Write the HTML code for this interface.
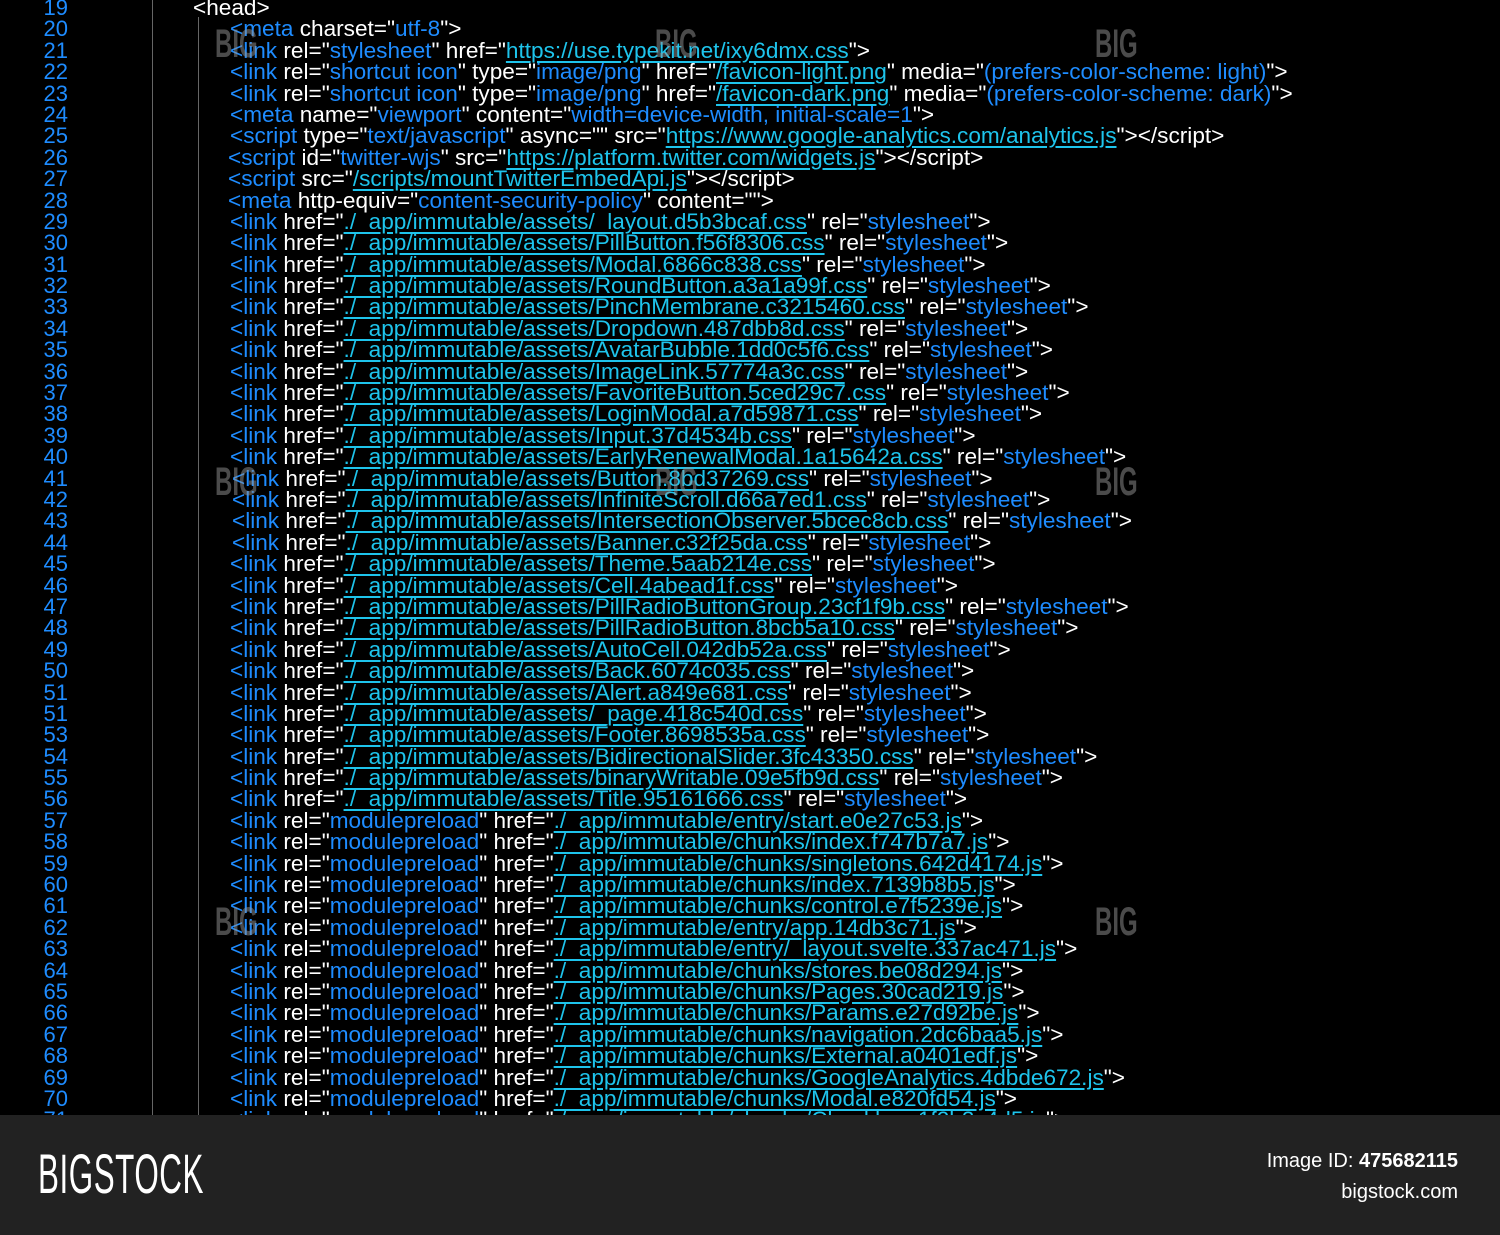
<!DOCTYPE html>
<html><head><meta charset="utf-8"><style>
html,body{margin:0;padding:0;background:#000;width:1500px;height:1235px;overflow:hidden;position:relative}
.code{position:absolute;left:0;top:-3px;font-family:"Liberation Sans","DejaVu Sans",sans-serif;font-size:22.6px;line-height:21.4px;color:#fff;white-space:pre}
.ln{position:absolute;left:0;width:68px;text-align:right;top:-3px;font-family:"Liberation Sans",sans-serif;font-size:22px;line-height:21.4px;color:#1e8cff}
.l{display:block;height:21.4px}
b{font-weight:normal;color:#1e8cff}
u{color:#1ec4ec;text-decoration:underline;text-decoration-color:#1ec4ec;text-underline-offset:3px}
.v{position:absolute;width:1px;background:#666}
.foot{position:absolute;left:0;top:1115px;width:1500px;height:120px;background:#222}
.logo{position:absolute;left:38px;top:1143px;font-family:"Liberation Sans",sans-serif;font-size:56px;color:#fff;transform:scaleX(0.56);transform-origin:left top;letter-spacing:1px;line-height:62px}
.id{position:absolute;right:42px;top:1146px;font-family:"Liberation Sans",sans-serif;font-size:20px;color:#fff;text-align:right;line-height:31px}
.wm{position:absolute;font-family:"Liberation Sans",sans-serif;font-size:40px;color:rgba(150,150,150,0.5);font-weight:bold;transform:scaleX(0.6);transform-origin:left top}
</style></head><body>
<div class="v" style="left:152px;top:0;height:1115px"></div>
<div class="v" style="left:198px;top:17px;height:1098px"></div>
<div class="ln"><span class="l">19</span><span class="l">20</span><span class="l">21</span><span class="l">22</span><span class="l">23</span><span class="l">24</span><span class="l">25</span><span class="l">26</span><span class="l">27</span><span class="l">28</span><span class="l">29</span><span class="l">30</span><span class="l">31</span><span class="l">32</span><span class="l">33</span><span class="l">34</span><span class="l">35</span><span class="l">36</span><span class="l">37</span><span class="l">38</span><span class="l">39</span><span class="l">40</span><span class="l">41</span><span class="l">42</span><span class="l">43</span><span class="l">44</span><span class="l">45</span><span class="l">46</span><span class="l">47</span><span class="l">48</span><span class="l">49</span><span class="l">50</span><span class="l">51</span><span class="l">51</span><span class="l">53</span><span class="l">54</span><span class="l">55</span><span class="l">56</span><span class="l">57</span><span class="l">58</span><span class="l">59</span><span class="l">60</span><span class="l">61</span><span class="l">62</span><span class="l">63</span><span class="l">64</span><span class="l">65</span><span class="l">66</span><span class="l">67</span><span class="l">68</span><span class="l">69</span><span class="l">70</span><span class="l">71</span></div>
<div class="code"><span class="l" style="padding-left:193px">&lt;head&gt;</span><span class="l" style="padding-left:230px"><b>&lt;meta</b> charset="<b>utf-8</b>"&gt;</span><span class="l" style="padding-left:230px"><b>&lt;link</b> rel="<b>stylesheet</b>" href="<u>https://use.typekit.net/ixy6dmx.css</u>"&gt;</span><span class="l" style="padding-left:230px"><b>&lt;link</b> rel="<b>shortcut icon</b>" type="<b>image/png</b>" href="<u>/favicon-light.png</u>" media="<b>(prefers-color-scheme: light)</b>"&gt;</span><span class="l" style="padding-left:230px"><b>&lt;link</b> rel="<b>shortcut icon</b>" type="<b>image/png</b>" href="<u>/favicon-dark.png</u>" media="<b>(prefers-color-scheme: dark)</b>"&gt;</span><span class="l" style="padding-left:230px"><b>&lt;meta</b> name="<b>viewport</b>" content="<b>width=device-width, initial-scale=1</b>"&gt;</span><span class="l" style="padding-left:230px"><b>&lt;script</b> type="<b>text/javascript</b>" async="" src="<u>https://www.google-analytics.com/analytics.js</u>"&gt;&lt;/script&gt;</span><span class="l" style="padding-left:228px"><b>&lt;script</b> id="<b>twitter-wjs</b>" src="<u>https://platform.twitter.com/widgets.js</u>"&gt;&lt;/script&gt;</span><span class="l" style="padding-left:228px"><b>&lt;script</b> src="<u>/scripts/mountTwitterEmbedApi.js</u>"&gt;&lt;/script&gt;</span><span class="l" style="padding-left:228px"><b>&lt;meta</b> http-equiv="<b>content-security-policy</b>" content=""&gt;</span><span class="l" style="padding-left:230px"><b>&lt;link</b> href="<u>./_app/immutable/assets/_layout.d5b3bcaf.css</u>" rel="<b>stylesheet</b>"&gt;</span><span class="l" style="padding-left:230px"><b>&lt;link</b> href="<u>./_app/immutable/assets/PillButton.f56f8306.css</u>" rel="<b>stylesheet</b>"&gt;</span><span class="l" style="padding-left:230px"><b>&lt;link</b> href="<u>./_app/immutable/assets/Modal.6866c838.css</u>" rel="<b>stylesheet</b>"&gt;</span><span class="l" style="padding-left:230px"><b>&lt;link</b> href="<u>./_app/immutable/assets/RoundButton.a3a1a99f.css</u>" rel="<b>stylesheet</b>"&gt;</span><span class="l" style="padding-left:230px"><b>&lt;link</b> href="<u>./_app/immutable/assets/PinchMembrane.c3215460.css</u>" rel="<b>stylesheet</b>"&gt;</span><span class="l" style="padding-left:230px"><b>&lt;link</b> href="<u>./_app/immutable/assets/Dropdown.487dbb8d.css</u>" rel="<b>stylesheet</b>"&gt;</span><span class="l" style="padding-left:230px"><b>&lt;link</b> href="<u>./_app/immutable/assets/AvatarBubble.1dd0c5f6.css</u>" rel="<b>stylesheet</b>"&gt;</span><span class="l" style="padding-left:230px"><b>&lt;link</b> href="<u>./_app/immutable/assets/ImageLink.57774a3c.css</u>" rel="<b>stylesheet</b>"&gt;</span><span class="l" style="padding-left:230px"><b>&lt;link</b> href="<u>./_app/immutable/assets/FavoriteButton.5ced29c7.css</u>" rel="<b>stylesheet</b>"&gt;</span><span class="l" style="padding-left:230px"><b>&lt;link</b> href="<u>./_app/immutable/assets/LoginModal.a7d59871.css</u>" rel="<b>stylesheet</b>"&gt;</span><span class="l" style="padding-left:230px"><b>&lt;link</b> href="<u>./_app/immutable/assets/Input.37d4534b.css</u>" rel="<b>stylesheet</b>"&gt;</span><span class="l" style="padding-left:230px"><b>&lt;link</b> href="<u>./_app/immutable/assets/EarlyRenewalModal.1a15642a.css</u>" rel="<b>stylesheet</b>"&gt;</span><span class="l" style="padding-left:232px"><b>&lt;link</b> href="<u>./_app/immutable/assets/Button.8bd37269.css</u>" rel="<b>stylesheet</b>"&gt;</span><span class="l" style="padding-left:232px"><b>&lt;link</b> href="<u>./_app/immutable/assets/InfiniteScroll.d66a7ed1.css</u>" rel="<b>stylesheet</b>"&gt;</span><span class="l" style="padding-left:232px"><b>&lt;link</b> href="<u>./_app/immutable/assets/IntersectionObserver.5bcec8cb.css</u>" rel="<b>stylesheet</b>"&gt;</span><span class="l" style="padding-left:232px"><b>&lt;link</b> href="<u>./_app/immutable/assets/Banner.c32f25da.css</u>" rel="<b>stylesheet</b>"&gt;</span><span class="l" style="padding-left:230px"><b>&lt;link</b> href="<u>./_app/immutable/assets/Theme.5aab214e.css</u>" rel="<b>stylesheet</b>"&gt;</span><span class="l" style="padding-left:230px"><b>&lt;link</b> href="<u>./_app/immutable/assets/Cell.4abead1f.css</u>" rel="<b>stylesheet</b>"&gt;</span><span class="l" style="padding-left:230px"><b>&lt;link</b> href="<u>./_app/immutable/assets/PillRadioButtonGroup.23cf1f9b.css</u>" rel="<b>stylesheet</b>"&gt;</span><span class="l" style="padding-left:230px"><b>&lt;link</b> href="<u>./_app/immutable/assets/PillRadioButton.8bcb5a10.css</u>" rel="<b>stylesheet</b>"&gt;</span><span class="l" style="padding-left:230px"><b>&lt;link</b> href="<u>./_app/immutable/assets/AutoCell.042db52a.css</u>" rel="<b>stylesheet</b>"&gt;</span><span class="l" style="padding-left:230px"><b>&lt;link</b> href="<u>./_app/immutable/assets/Back.6074c035.css</u>" rel="<b>stylesheet</b>"&gt;</span><span class="l" style="padding-left:230px"><b>&lt;link</b> href="<u>./_app/immutable/assets/Alert.a849e681.css</u>" rel="<b>stylesheet</b>"&gt;</span><span class="l" style="padding-left:230px"><b>&lt;link</b> href="<u>./_app/immutable/assets/_page.418c540d.css</u>" rel="<b>stylesheet</b>"&gt;</span><span class="l" style="padding-left:230px"><b>&lt;link</b> href="<u>./_app/immutable/assets/Footer.8698535a.css</u>" rel="<b>stylesheet</b>"&gt;</span><span class="l" style="padding-left:230px"><b>&lt;link</b> href="<u>./_app/immutable/assets/BidirectionalSlider.3fc43350.css</u>" rel="<b>stylesheet</b>"&gt;</span><span class="l" style="padding-left:230px"><b>&lt;link</b> href="<u>./_app/immutable/assets/binaryWritable.09e5fb9d.css</u>" rel="<b>stylesheet</b>"&gt;</span><span class="l" style="padding-left:230px"><b>&lt;link</b> href="<u>./_app/immutable/assets/Title.95161666.css</u>" rel="<b>stylesheet</b>"&gt;</span><span class="l" style="padding-left:230px"><b>&lt;link</b> rel="<b>modulepreload</b>" href="<u>./_app/immutable/entry/start.e0e27c53.js</u>"&gt;</span><span class="l" style="padding-left:230px"><b>&lt;link</b> rel="<b>modulepreload</b>" href="<u>./_app/immutable/chunks/index.f747b7a7.js</u>"&gt;</span><span class="l" style="padding-left:230px"><b>&lt;link</b> rel="<b>modulepreload</b>" href="<u>./_app/immutable/chunks/singletons.642d4174.js</u>"&gt;</span><span class="l" style="padding-left:230px"><b>&lt;link</b> rel="<b>modulepreload</b>" href="<u>./_app/immutable/chunks/index.7139b8b5.js</u>"&gt;</span><span class="l" style="padding-left:230px"><b>&lt;link</b> rel="<b>modulepreload</b>" href="<u>./_app/immutable/chunks/control.e7f5239e.js</u>"&gt;</span><span class="l" style="padding-left:230px"><b>&lt;link</b> rel="<b>modulepreload</b>" href="<u>./_app/immutable/entry/app.14db3c71.js</u>"&gt;</span><span class="l" style="padding-left:230px"><b>&lt;link</b> rel="<b>modulepreload</b>" href="<u>./_app/immutable/entry/_layout.svelte.337ac471.js</u>"&gt;</span><span class="l" style="padding-left:230px"><b>&lt;link</b> rel="<b>modulepreload</b>" href="<u>./_app/immutable/chunks/stores.be08d294.js</u>"&gt;</span><span class="l" style="padding-left:230px"><b>&lt;link</b> rel="<b>modulepreload</b>" href="<u>./_app/immutable/chunks/Pages.30cad219.js</u>"&gt;</span><span class="l" style="padding-left:230px"><b>&lt;link</b> rel="<b>modulepreload</b>" href="<u>./_app/immutable/chunks/Params.e27d92be.js</u>"&gt;</span><span class="l" style="padding-left:230px"><b>&lt;link</b> rel="<b>modulepreload</b>" href="<u>./_app/immutable/chunks/navigation.2dc6baa5.js</u>"&gt;</span><span class="l" style="padding-left:230px"><b>&lt;link</b> rel="<b>modulepreload</b>" href="<u>./_app/immutable/chunks/External.a0401edf.js</u>"&gt;</span><span class="l" style="padding-left:230px"><b>&lt;link</b> rel="<b>modulepreload</b>" href="<u>./_app/immutable/chunks/GoogleAnalytics.4dbde672.js</u>"&gt;</span><span class="l" style="padding-left:230px"><b>&lt;link</b> rel="<b>modulepreload</b>" href="<u>./_app/immutable/chunks/Modal.e820fd54.js</u>"&gt;</span><span class="l" style="padding-left:230px"><b>&lt;link</b> rel="<b>modulepreload</b>" href="<u>./_app/immutable/chunks/Checkbox.1f2b3c4d5.js</u>"&gt;</span></div>
<div class="wm" style="left:215px;top:22px">BIG</div>
<div class="wm" style="left:655px;top:22px">BIG</div>
<div class="wm" style="left:1095px;top:22px">BIG</div>
<div class="wm" style="left:215px;top:460px">BIG</div>
<div class="wm" style="left:655px;top:460px">BIG</div>
<div class="wm" style="left:1095px;top:460px">BIG</div>
<div class="wm" style="left:215px;top:900px">BIG</div>
<div class="wm" style="left:1095px;top:900px">BIG</div>
<div class="foot"></div>
<div class="logo">BIGSTOCK</div>
<div class="id">Image ID: <span style="font-weight:bold">475682115</span><br>bigstock.com</div>
</body></html>
